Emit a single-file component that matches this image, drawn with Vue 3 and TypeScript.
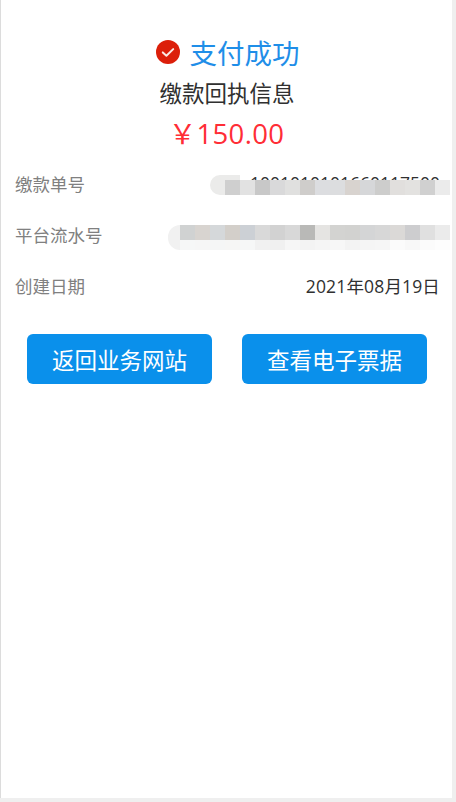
<script setup lang="ts">
const mosaicOne = ['#cfcfcf', '#e2e2e2', '#c8c8c8', '#d9d9da', '#e0e0df', '#cfcdcb', '#dcdde0', '#dcdddf', '#d8d3cf', '#d6d7d9', '#cdcdcc', '#e1dfdd', '#e3e2e0', '#d0d0d0', '#ebebeb']
const mosaicTwoTop = ['#d0d2d2', '#d8d4d0', '#d5d8da', '#d3cfca', '#ccd0d5', '#d9d9d9', '#d2d2d2', '#d8d8d8', '#b9b9b7', '#e5e4e2', '#d3d3d1', '#d2d2d0', '#d4d5d6', '#d7d7d7', '#dbd9d7', '#cdcdcf', '#e0e0e0', '#ebebeb']
const mosaicTwoBottom = ['#f6f7f7', '#f6f6f6', '#f5f6f6', '#f6f6f5', '#f6f7f7', '#f1f1f1', '#f0f0f0', '#f6f6f6', '#f3f3f3', '#f5f5f5', '#f7f7f7', '#f3f3f3', '#f5f5f5', '#f6f6f6', '#fbfbfb', '#f8f8f8', '#fbfbfb', '#fdfdfd']
</script>

<template>
  <main class="page">
    <section class="card">
      <h1 class="status">
        <svg class="status-icon" viewBox="0 0 24 24" aria-hidden="true">
          <circle cx="12" cy="12" r="12" fill="#dc1f0a" />
          <path d="M6.8 12.4l3.6 3.3 6.8-6.6" fill="none" stroke="#fbe9e4" stroke-width="2" stroke-linecap="round" stroke-linejoin="round" />
        </svg>
        <span>支付成功</span>
      </h1>
      <h2 class="subtitle">缴款回执信息</h2>
      <p class="amount">￥150.00</p>

      <dl class="rows">
        <div class="row">
          <dt>缴款单号</dt>
          <dd class="masked">
            <span class="hidden-number">1001010101660117500</span>
            <span class="mosaic mosaic-one">
              <i class="cap" />
              <i v-for="(c, i) in mosaicOne" :key="i" class="cell" :style="{ background: c }" />
            </span>
          </dd>
        </div>
        <div class="row">
          <dt>平台流水号</dt>
          <dd class="masked">
            <span class="mosaic-two">
              <span class="mosaic">
                <i class="cap cap-two" />
                <i v-for="(c, i) in mosaicTwoTop" :key="i" class="cell" :style="{ background: c }" />
              </span>
              <span class="mosaic mosaic-low">
                <i v-for="(c, i) in mosaicTwoBottom" :key="i" class="cell low" :style="{ background: c }" />
              </span>
            </span>
          </dd>
        </div>
        <div class="row">
          <dt>创建日期</dt>
          <dd class="date">2021年08月19日</dd>
        </div>
      </dl>

      <div class="actions">
        <button type="button">返回业务网站</button>
        <button type="button">查看电子票据</button>
      </div>
    </section>
  </main>
</template>

<style>
html, body { margin: 0; background: #f0f0f0; }
</style>

<style scoped>
.page {
  width: 456px;
  height: 802px;
  box-sizing: border-box;
  padding: 0 4px 4px 0;
  background: #efefef;
  overflow: hidden;
  font-family: "Open Sans", "Noto Sans CJK SC", sans-serif;
}
.card {
  height: 100%;
  box-sizing: border-box;
  background: #fff;
  border-left: 1px solid #dcdcdc;
  padding-top: 32px;
  overflow: hidden;
}
.status {
  margin: 0;
  display: flex;
  justify-content: center;
  align-items: center;
  gap: 10px;
  height: 40px;
  padding-left: 2px;
  font-size: 27.5px;
  font-weight: 400;
  color: #1f8ee8;
}
.status-icon { width: 24px; height: 24px; flex: none; }
.subtitle {
  margin: 0;
  height: 42px;
  line-height: 44px;
  padding-left: 1px;
  text-align: center;
  font-size: 22.5px;
  font-weight: 400;
  color: #303030;
}
.amount {
  margin: 0;
  height: 40px;
  line-height: 40px;
  text-align: center;
  font-size: 27.5px;
  letter-spacing: 0.3px;
  color: #ff2d36;
}
.rows { margin: 4px 0 0; padding: 0 12px 0 14px; }
.row {
  display: flex;
  justify-content: space-between;
  align-items: center;
  height: 51px;
  font-size: 17.5px;
}
dt { color: #808080; }
dd { margin: 0; color: #303030; }
.date { letter-spacing: 0.15px; }
.masked {
  flex: 1;
  position: relative;
  height: 100%;
}
.hidden-number {
  position: absolute;
  right: 0;
  top: 15px;
  line-height: 20px;
  white-space: nowrap;
}
.mosaic {
  display: flex;
  height: 20px;
}
.mosaic-one {
  position: absolute;
  top: 17px;
  right: -10px;
  align-items: flex-end;
}
.mosaic-one .cell { height: 15px; }
.mosaic-two {
  position: absolute;
  top: 16px;
  right: -10px;
}
.mosaic-two .mosaic { height: 15px; }
.mosaic-two .mosaic-low { height: 10px; justify-content: flex-end; }
.cap {
  width: 30px;
  height: 20px;
  margin-right: -15px;
  background: #ebebea;
  border-radius: 10px 0 0 10px;
}
.cap-two {
  width: 12px;
  height: 25px;
  margin-right: 0;
  background: #f1f1f1;
  border-radius: 12px 0 0 12px;
}
.cell { width: 15px; flex: none; }
.actions {
  margin-top: 23px;
  padding: 0 25px 0 26px;
  display: flex;
  justify-content: space-between;
}
button {
  width: 185px;
  height: 50px;
  border: 0;
  border-radius: 6px;
  padding: 0;
  background: #0a90eb;
  color: #fff;
  font: inherit;
  font-size: 22.5px;
}
</style>
